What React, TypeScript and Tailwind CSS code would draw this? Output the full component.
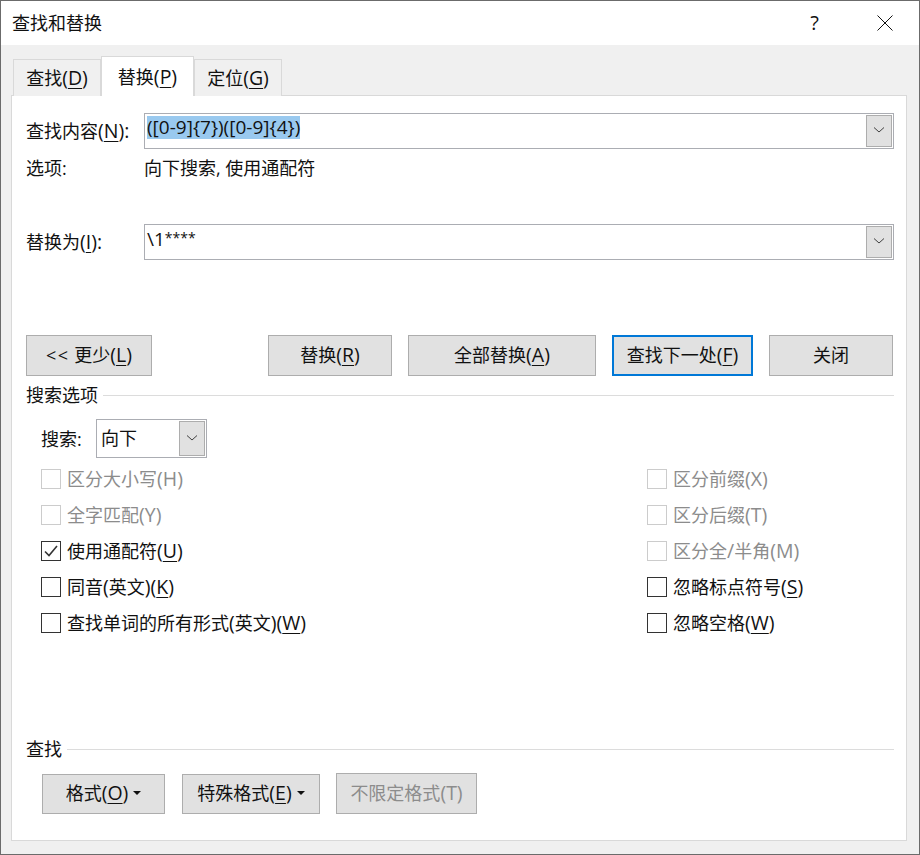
import React from "react";

const L = ({ children }: { children: React.ReactNode }) => (
  <span className="text-[19.5px] underline-offset-[3px]">{children}</span>
);

const Chevron = () => (
  <svg width="12" height="6" viewBox="0 0 12 6" fill="none" className="-mt-[2px]">
    <path d="M1 0.5 L6 5 L11 0.5" stroke="#404040" strokeWidth="1" />
  </svg>
);

const DropBtn = ({ cls }: { cls: string }) => (
  <div className={`flex items-center justify-center bg-[#e1e1e1] border border-[#adadad] ${cls}`}>
    <Chevron />
  </div>
);

const Combo = ({ children }: { children: React.ReactNode }) => (
  <div className="ml-[3px] flex h-[36px] w-[750px] items-center justify-between border border-[#abadb3] bg-white pl-[1px] pr-[1px]">
    <div className="-mt-[8px] flex-1 text-[19px] leading-[24px]">{children}</div>
    <DropBtn cls="h-[32px] w-[26px]" />
  </div>
);

const Btn = ({ children, cls }: { children: React.ReactNode; cls: string }) => (
  <div className={`flex items-center justify-center bg-[#e1e1e1] pb-[2px] ${cls}`}>{children}</div>
);

const Check = ({ label, disabled, checked }: { label: React.ReactNode; disabled?: boolean; checked?: boolean }) => (
  <div className={`flex h-[36px] items-center gap-[6px] ${disabled ? "text-[#8c8c8c]" : ""}`}>
    <div className={`flex h-[20px] w-[20px] items-center justify-center border bg-white ${disabled ? "border-[#cccccc]" : "border-[#333333]"}`}>
      {checked && (
        <svg width="14" height="12" viewBox="0 0 14 12" fill="none">
          <path d="M1 6.5 L5 10.5 L13 1" stroke="#333333" strokeWidth="1.6" />
        </svg>
      )}
    </div>
    <span>{label}</span>
  </div>
);

const Legend = ({ text, cls }: { text: string; cls: string }) => (
  <div className={`flex h-[24px] items-center gap-[5px] ${cls}`}>
    <span>{text}</span>
    <div className="h-px flex-1 bg-[#dcdcdc]" />
  </div>
);

const Caret = () => (
  <svg width="8" height="4" viewBox="0 0 8 4" className="ml-[5px]">
    <path d="M0 0 H8 L4 4 Z" fill="#111111" />
  </svg>
);

export default function App() {
  return (
    <div
      className="flex h-[855px] w-[920px] flex-col border border-[#6b6b6b] bg-[#f0f0f0] text-[18px] leading-[24px] text-[#111111]"
      style={{ fontFamily: '"Open Sans", "Noto Sans CJK SC", sans-serif' }}
    >
      <div className="flex h-[44px] shrink-0 items-center bg-white pl-[11px]">
        <span className="flex-1">查找和替换</span>
        <span className="mr-[58px] text-[20px]">?</span>
        <svg width="16" height="16" viewBox="0 0 16 16" className="mr-[26px]" fill="none">
          <path d="M0.5 0.5 L15.5 15.5 M15.5 0.5 L0.5 15.5" stroke="#111111" strokeWidth="1" />
        </svg>
      </div>

      <div className="relative z-10 flex h-[51px] shrink-0 items-end pl-[12px]">
        <div className="flex h-[37px] w-[88px] items-center justify-center border border-b-0 border-[#d9d9d9] bg-[#f0f0f0]">
          <span>查找<L>(<u>D</u>)</L></span>
        </div>
        <div className="flex h-[40px] w-[93px] items-center justify-center border border-b-0 border-[#d9d9d9] bg-white">
          <span>替换<L>(<u>P</u>)</L></span>
        </div>
        <div className="flex h-[37px] w-[88px] items-center justify-center border border-b-0 border-[#d9d9d9] bg-[#f0f0f0]">
          <span>定位<L>(<u>G</u>)</L></span>
        </div>
      </div>

      <div className="-mt-px ml-[10px] flex h-[746px] w-[896px] flex-col border border-[#d9d9d9] bg-white pl-[14px] pr-[12px] pt-[17px]">
        <div className="flex items-center">
          <span className="w-[115px]">查找内容<L>(<u>N</u>):</L></span>
          <Combo>
            <span className="ml-[1px] inline-block bg-[#99c9ef] leading-[23px]">([0-9]{"{"}7{"}"})([0-9]{"{"}4{"}"})</span>
          </Combo>
        </div>
        <div className="mt-[7px] flex h-[24px] items-center">
          <span className="w-[118px]">选项:</span>
          <span>向下搜索, 使用通配符</span>
        </div>
        <div className="mt-[44px] flex items-center">
          <span className="w-[115px]">替换为<L>(<u>I</u>):</L></span>
          <Combo>
            <span className="ml-[1px]">\1</span><span className="align-[3px] text-[14px]">****</span>
          </Combo>
        </div>

        <div className="mt-[75px] flex h-[41px] gap-[16px]">
          <Btn cls="mr-[100px] w-[126px] border border-[#adadad]">
            <span><span className="tracking-[1.5px]">&lt;&lt;</span> 更少<L>(<u>L</u>)</L></span>
          </Btn>
          <Btn cls="w-[124px] border border-[#adadad]">
            <span>替换<L>(<u>R</u>)</L></span>
          </Btn>
          <Btn cls="w-[188px] border border-[#adadad]">
            <span>全部替换<L>(<u>A</u>)</L></span>
          </Btn>
          <Btn cls="w-[141px] border-2 border-[#0078d7]">
            <span>查找下一处<L>(<u>F</u>)</L></span>
          </Btn>
          <Btn cls="w-[124px] border border-[#adadad]">
            <span>关闭</span>
          </Btn>
        </div>

        <Legend text="搜索选项" cls="mt-[7px]" />

        <div className="ml-[15px] mt-[12px] flex h-[39px] items-center">
          <span className="w-[55px]">搜索:</span>
          <div className="flex h-[39px] w-[111px] items-center justify-between border border-[#abadb3] pl-[4px] pr-[1px]">
            <span className="-mt-[2px]">向下</span>
            <DropBtn cls="h-[35px] w-[26px]" />
          </div>
        </div>

        <div className="ml-[15px] mt-[3px] flex">
          <div className="w-[606px]">
            <Check disabled label={<>区分大小写<L>(H)</L></>} />
            <Check disabled label={<>全字匹配<L>(Y)</L></>} />
            <Check checked label={<>使用通配符<L>(<u>U</u>)</L></>} />
            <Check label={<>同音<L>(</L>英文<L>)(<u>K</u>)</L></>} />
            <Check label={<>查找单词的所有形式<L>(</L>英文<L>)(<u>W</u>)</L></>} />
          </div>
          <div>
            <Check disabled label={<>区分前缀<L>(X)</L></>} />
            <Check disabled label={<>区分后缀<L>(T)</L></>} />
            <Check disabled label={<>区分全<L>/</L>半角<L>(M)</L></>} />
            <Check label={<>忽略标点符号<L>(<u>S</u>)</L></>} />
            <Check label={<>忽略空格<L>(<u>W</u>)</L></>} />
          </div>
        </div>

        <Legend text="查找" cls="mt-[96px]" />

        <div className="ml-[16px] mt-[12px] flex h-[41px] items-end gap-[17px]">
          <Btn cls="h-[40px] w-[123px] border border-[#adadad]">
            <span>格式<L>(<u>O</u>)</L></span>
            <Caret />
          </Btn>
          <Btn cls="h-[40px] w-[138px] border border-[#adadad]">
            <span>特殊格式<L>(<u>E</u>)</L></span>
            <Caret />
          </Btn>
          <Btn cls="-ml-px h-[41px] w-[141px] border border-[#adadad] text-[#8c8c8c]">
            <span>不限定格式<L>(T)</L></span>
          </Btn>
        </div>
      </div>
    </div>
  );
}
